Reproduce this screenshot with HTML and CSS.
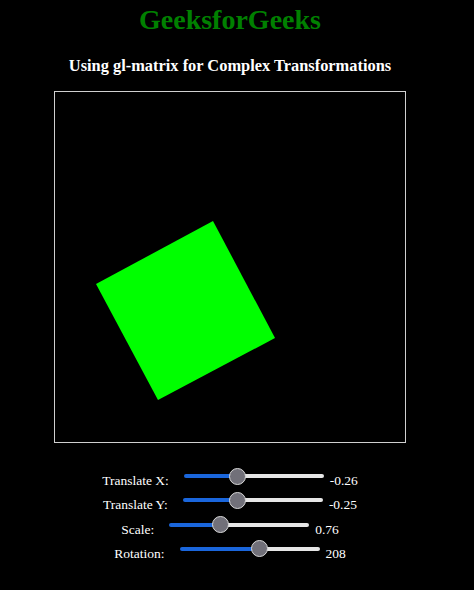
FILE: index.html
```html
<!DOCTYPE html>
<html>
<head>
<meta charset="utf-8">
<link rel="stylesheet" href="styles.css">
</head>
<body>
<div class="page">
  <h1 class="brand">GeeksforGeeks</h1>
  <h3 class="subtitle">Using gl-matrix for Complex Transformations</h3>
  <div class="canvas">
    <svg class="scene" width="350" height="350" viewBox="0 0 350 350">
      <polygon points="158,129 220,246 103,308 41,192" fill="#00ff00"/>
    </svg>
  </div>
  <div class="controls">
    <div class="row">
      <label class="label">Translate X:</label>
      <input class="slider" type="range" min="-1" max="1" step="0.01" value="-0.26" style="--p: 37%">
      <span class="value">-0.26</span>
    </div>
    <div class="row">
      <label class="label">Translate Y:</label>
      <input class="slider" type="range" min="-1" max="1" step="0.01" value="-0.25" style="--p: 37.5%">
      <span class="value">-0.25</span>
    </div>
    <div class="row">
      <label class="label">Scale:</label>
      <input class="slider" type="range" min="0.1" max="2" step="0.01" value="0.76" style="--p: 34.7%">
      <span class="value">0.76</span>
    </div>
    <div class="row">
      <label class="label">Rotation:</label>
      <input class="slider" type="range" min="0" max="360" step="1" value="208" style="--p: 57.8%">
      <span class="value">208</span>
    </div>
  </div>
</div>
</body>
</html>
```

FILE: styles.css
```css
html, body {
  margin: 0;
  padding: 0;
  background: #000;
}

.page {
  width: 460px;
  display: flex;
  flex-direction: column;
  align-items: center;
  font-family: "Liberation Serif", "Times New Roman", serif;
  color: #fff;
}

.brand {
  margin: 4px 0 0;
  font-size: 28px;
  line-height: 32px;
  font-weight: bold;
  color: #008000;
}

.subtitle {
  margin: 20px 0 0;
  font-size: 16.4px;
  line-height: 20px;
  font-weight: bold;
  color: #fff;
}

.canvas {
  margin-top: 15px;
  width: 350px;
  height: 350px;
  border: 1px solid #d0d0d0;
}

.scene {
  display: block;
}

.controls {
  margin-top: 29px;
  display: flex;
  flex-direction: column;
  gap: 6.3px;
}

.row {
  display: flex;
  justify-content: center;
  align-items: center;
  height: 18px;
  font-size: 13.5px;
}

.label {
  margin-right: 15px;
}

.value {
  margin-left: 6px;
}

.slider {
  -webkit-appearance: none;
  appearance: none;
  width: 140px;
  height: 4px;
  margin: 0 0 10px;
  border-radius: 2px;
  background: linear-gradient(to right, #1a66dc 0, #1a66dc calc(8px + var(--p) * 0.88), #e6e6e6 calc(8px + var(--p) * 0.88), #e6e6e6 100%);
  outline: none;
}

.slider::-webkit-slider-thumb {
  -webkit-appearance: none;
  appearance: none;
  width: 17px;
  height: 17px;
  border-radius: 50%;
  background: #717079;
  border: 1.5px solid #d8d8d8;
  box-sizing: border-box;
}
```
